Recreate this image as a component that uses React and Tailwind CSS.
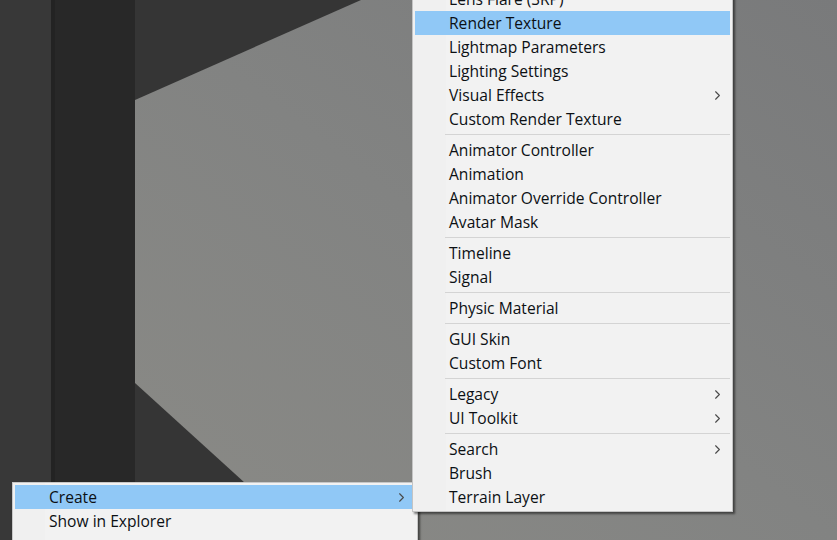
import { ChevronRight } from "lucide-react";

const font = "font-['Open_Sans','Noto_Sans',sans-serif]";

const groups = [
  [
    { label: "Lens Flare (SRP)" },
    { label: "Render Texture", active: true },
    { label: "Lightmap Parameters" },
    { label: "Lighting Settings" },
    { label: "Visual Effects", sub: true },
    { label: "Custom Render Texture" },
  ],
  [
    { label: "Animator Controller" },
    { label: "Animation" },
    { label: "Animator Override Controller" },
    { label: "Avatar Mask" },
  ],
  [{ label: "Timeline" }, { label: "Signal" }],
  [{ label: "Physic Material" }],
  [{ label: "GUI Skin" }, { label: "Custom Font" }],
  [{ label: "Legacy", sub: true }, { label: "UI Toolkit", sub: true }],
  [{ label: "Search", sub: true }, { label: "Brush" }, { label: "Terrain Layer" }],
];

const MenuRow = ({ label, active, sub }) => {
  return (
    <div className={`flex h-6 items-center justify-between pl-[34px] pr-[5px] ${active ? "bg-[#90c8f6]" : ""}`}>
      <span className="text-[15.6px] leading-6 text-[#0c1014]">{label}</span>
      {sub && <ChevronRight size={15} strokeWidth={1.8} className="text-[#4a4a4a]" />}
    </div>
  );
};

const App = () => {
  return (
    <div className={`relative flex h-[540px] w-[837px] overflow-hidden bg-[#7f7f7d] ${font}`}>
      {/* Scene behind the menus */}
      <div className="w-[51px] bg-[#383838]" />
      <div className="w-[84px] border-l-4 border-[#232323] bg-[#282828]" />
      <svg className="flex-1" viewBox="0 0 702 540" width="702" height="540">
        <defs>
          <linearGradient id="wall" x1="1" y1="0" x2="0" y2="1">
            <stop offset="0" stopColor="#797a7b" />
            <stop offset="0.5" stopColor="#828382" />
            <stop offset="1" stopColor="#8a8a86" />
          </linearGradient>
        </defs>
        <rect width="702" height="540" fill="url(#wall)" />
        <polygon points="0,0 226,0 0,100" fill="#353535" />
        <polygon points="0,383 110,483 0,483" fill="#353535" />
      </svg>

      {/* Parent context menu */}
      <div className="absolute left-3 top-[482px] h-[70px] w-[406px] border border-[#c8c8c8] bg-[linear-gradient(to_right,#f0f0f0_32px,#f2f2f2_32px)] py-0.5 pl-0.5 pr-[3px] shadow-[2px_2px_2px_rgba(0,0,0,0.5)]">
        <MenuRow label="Create" active sub />
        <MenuRow label="Show in Explorer" />
      </div>

      {/* Create submenu */}
      <div className="absolute left-[412px] top-[-16px] w-[321px] border border-[#c4c4c4] bg-[linear-gradient(to_right,#f0f0f0_33px,#f2f2f2_33px)] py-0.5 pl-0.5 pr-0.5 shadow-[2px_2px_2px_rgba(0,0,0,0.5)]">
        {groups.map((rows, i) => (
          <div key={i}>
            {i > 0 && <div className="my-[3px] ml-[30px] h-px bg-[#d4d4d4]" />}
            {rows.map((row) => (
              <MenuRow key={row.label} {...row} />
            ))}
          </div>
        ))}
      </div>
    </div>
  );
};

export default App;
